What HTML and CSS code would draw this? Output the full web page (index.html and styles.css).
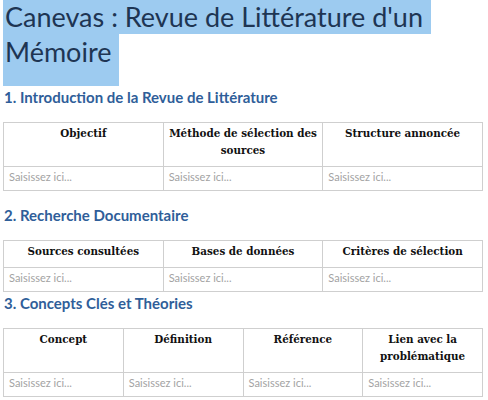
FILE: index.html
```html
<!DOCTYPE html>
<html lang="fr">
<head>
    <meta charset="UTF-8">
    <meta name="viewport" content="width=device-width, initial-scale=1.0">
    <title>Canevas : Revue de Littérature d'un Mémoire</title>
    <link rel="stylesheet" href="styles.css">
</head>
<body>

<div class="page">
    <h1 class="doc-title">
        <span class="title-line">Canevas : Revue de Littérature d'un</span>
        <span class="title-line title-last">Mémoire</span>
    </h1>

    <h2 class="section-title">1. Introduction de la Revue de Littérature</h2>
    <table class="grid grid-spaced">
        <tr>
            <th>Objectif</th>
            <th>Méthode de sélection des sources</th>
            <th>Structure annoncée</th>
        </tr>
        <tr>
            <td>Saisissez ici...</td>
            <td>Saisissez ici...</td>
            <td>Saisissez ici...</td>
        </tr>
    </table>

    <h2 class="section-title">2. Recherche Documentaire</h2>
    <table class="grid">
        <tr>
            <th>Sources consultées</th>
            <th>Bases de données</th>
            <th>Critères de sélection</th>
        </tr>
        <tr>
            <td>Saisissez ici...</td>
            <td>Saisissez ici...</td>
            <td>Saisissez ici...</td>
        </tr>
    </table>

    <h2 class="section-title">3. Concepts Clés et Théories</h2>
    <table class="grid">
        <tr>
            <th>Concept</th>
            <th>Définition</th>
            <th>Référence</th>
            <th>Lien avec la problématique</th>
        </tr>
        <tr>
            <td>Saisissez ici...</td>
            <td>Saisissez ici...</td>
            <td>Saisissez ici...</td>
            <td>Saisissez ici...</td>
        </tr>
    </table>
</div>

</body>
</html>
```

FILE: styles.css
```css
body {
    margin: 0;
    padding: 0;
    background-color: #ffffff;
    font-family: Lato, "Open Sans", sans-serif;
}

.page {
    padding: 0 5px 0 3px;
}

.doc-title {
    margin: 0;
    font-size: 27px;
    font-weight: normal;
    color: #1e3553;
}

.title-line {
    display: block;
    width: fit-content;
    padding: 0 8px 0 2px;
    background-color: #9dcbf0;
    height: 34px;
    line-height: 34px;
}

.title-last {
    height: 52px;
    line-height: 36px;
}

.section-title {
    margin: 2px 0 16px 1px;
    font-size: 15px;
    font-weight: bold;
    color: #2f5e99;
}

.grid {
    width: 100%;
    border-collapse: collapse;
    table-layout: fixed;
}

.grid-spaced {
    margin-bottom: 15px;
}

.grid th,
.grid td {
    border: 1px solid #cfcfcf;
    vertical-align: top;
}

.grid th {
    padding: 2px 4px 7px;
    font-family: "DejaVu Serif Condensed", "Liberation Serif", serif;
    font-size: 11.5px;
    line-height: 17px;
    font-weight: bold;
    color: #111111;
    text-align: center;
}

.grid td {
    padding: 2px 5px 5px;
    font-size: 11px;
    line-height: 16px;
    color: #a3a3a3;
    text-align: left;
}
```
